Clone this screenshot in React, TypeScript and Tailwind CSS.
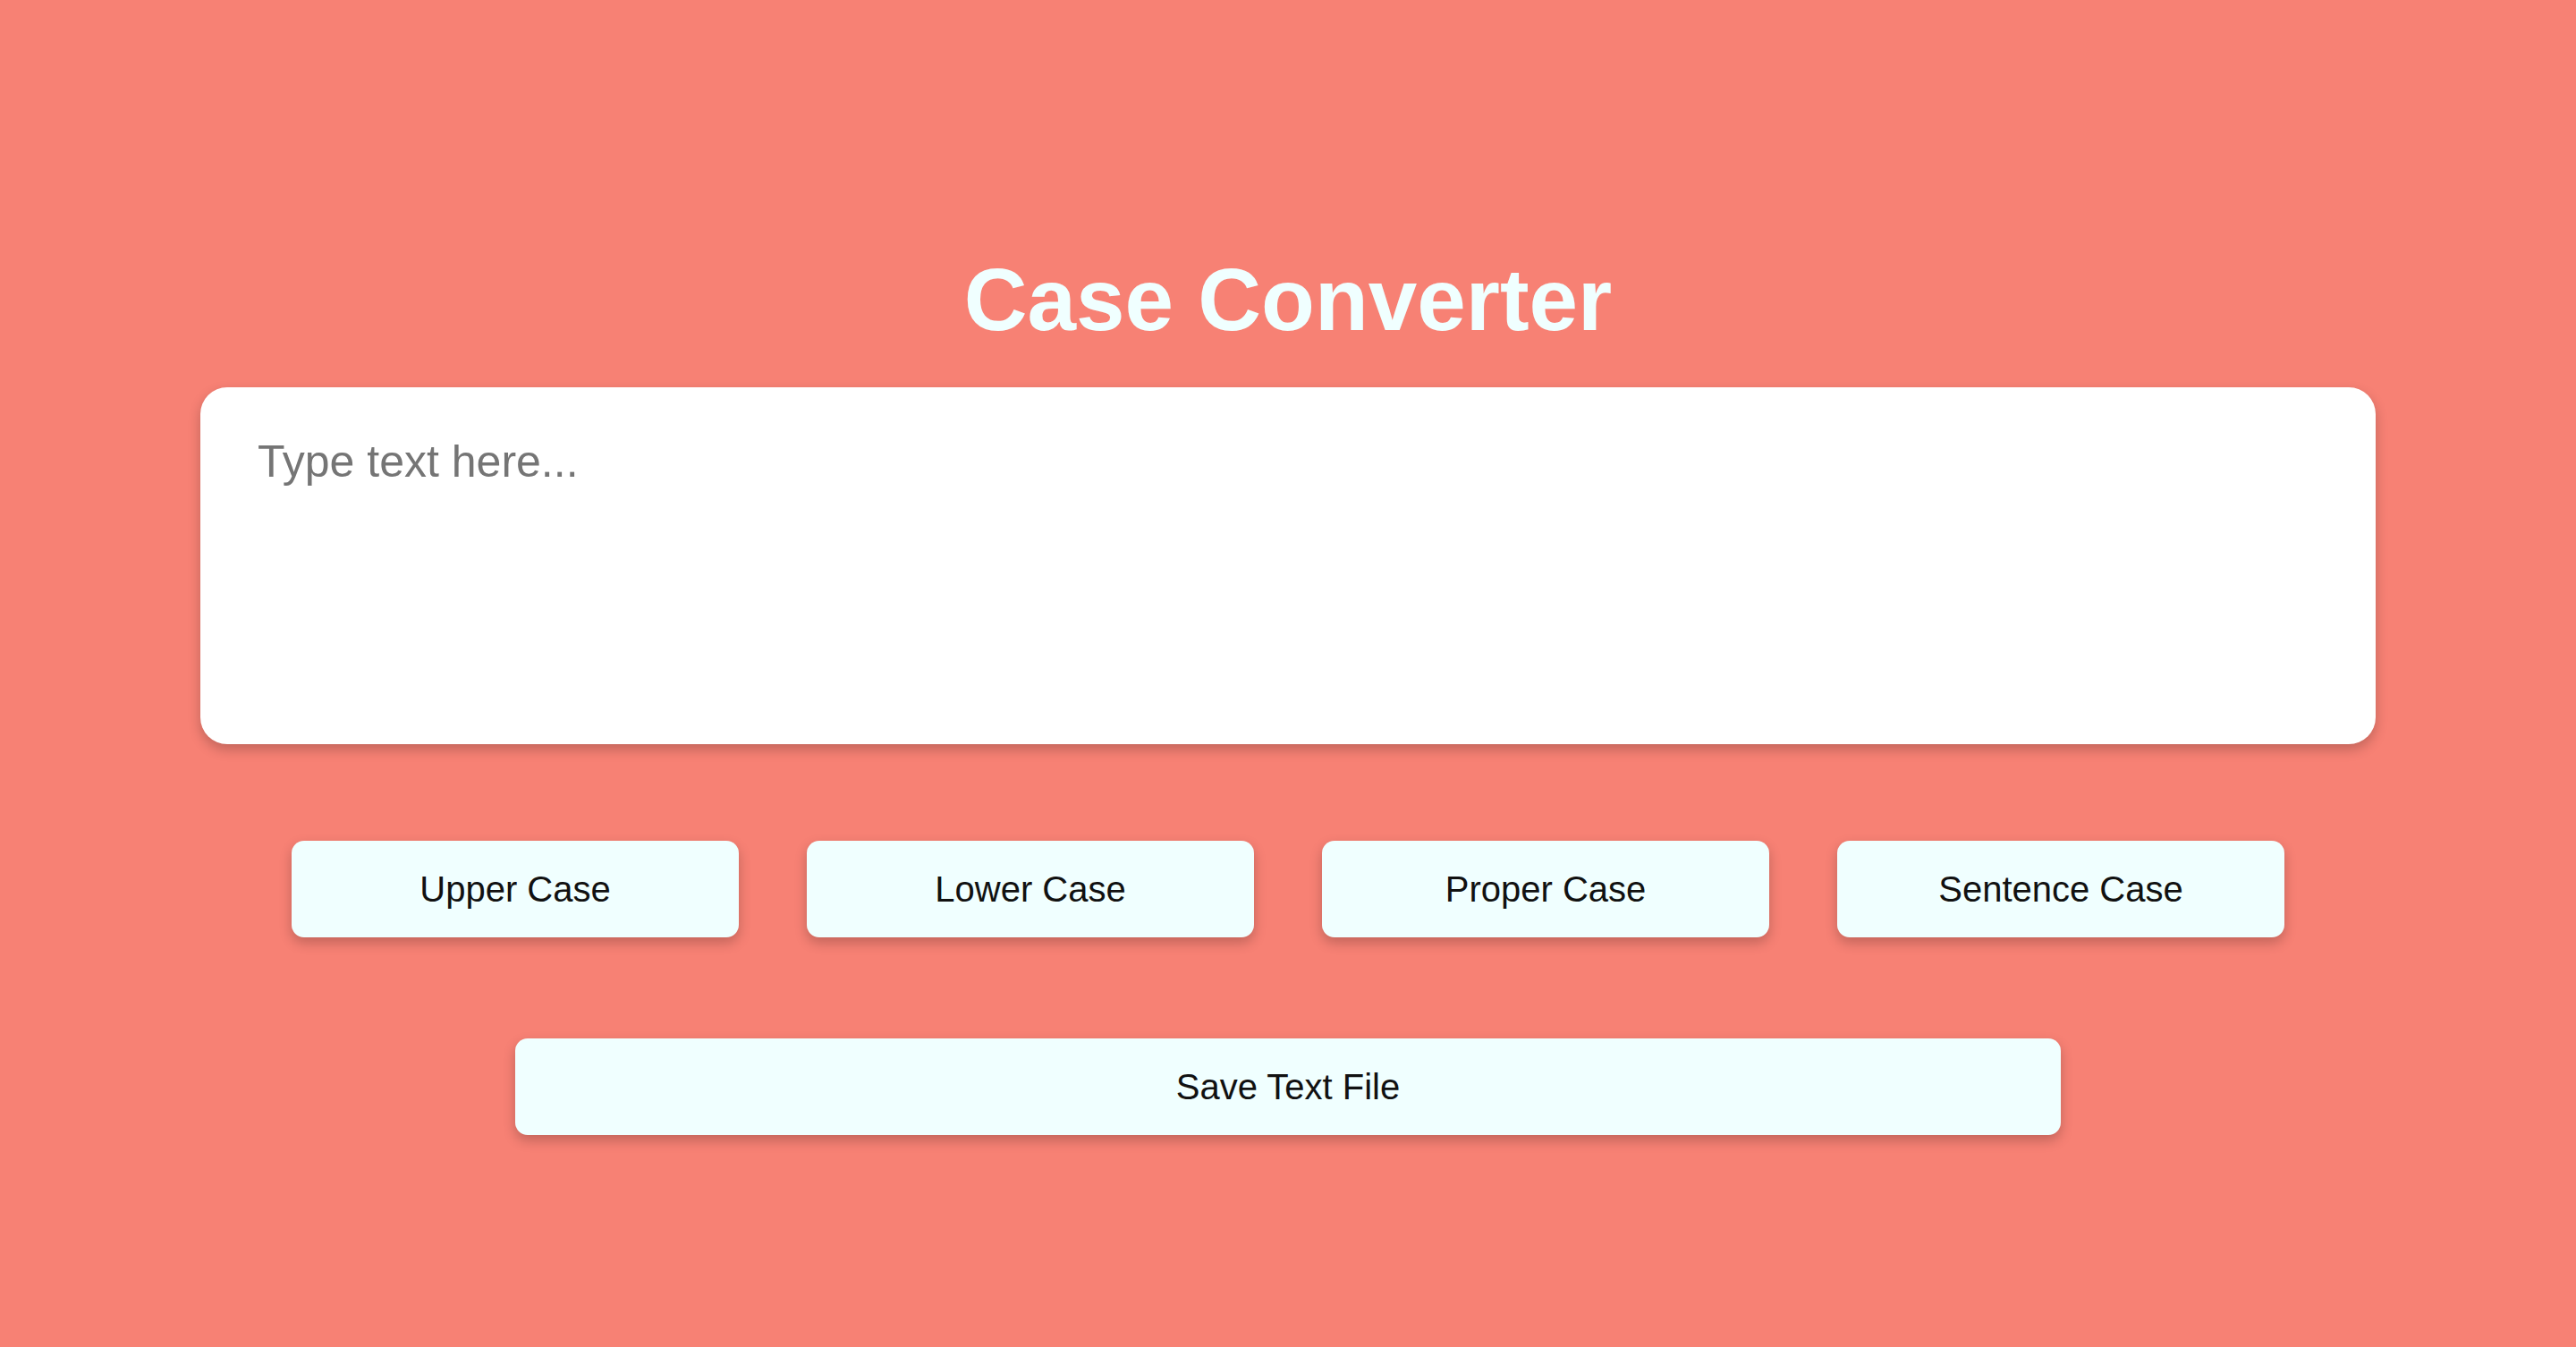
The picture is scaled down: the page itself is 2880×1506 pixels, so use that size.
import React, { useState } from "react"

const buttons = ["Upper Case", "Lower Case", "Proper Case", "Sentence Case"]

export default function App() {
  const [text, setText] = useState("")

  return (
    <div className="min-h-screen w-full bg-[#f78174] flex flex-col items-center font-['Liberation_Sans',Arial,sans-serif]">
      <h1 className="mt-[279px] text-[98px] leading-[112px] font-bold text-[#f0ffff]">Case Converter</h1>

      <textarea
        value={text}
        onChange={(e) => setText(e.target.value)}
        placeholder="Type text here..."
        className="mt-[42px] w-[2432px] h-[399px] resize-none rounded-[30px] bg-white pt-[46px] px-[64px] text-[50px] text-[#222] placeholder:text-[#757575] outline-none shadow-[0_6px_14px_rgba(0,0,0,0.22)]"
      />

      <div className="mt-[108px] flex gap-[76px]">
        {buttons.map((label) => (
          <button
            key={label}
            className="w-[500px] h-[108px] rounded-[14px] bg-[#f0ffff] text-[40px] text-[#111] shadow-[0_6px_14px_rgba(0,0,0,0.22)]"
          >
            {label}
          </button>
        ))}
      </div>

      <button className="mt-[113px] w-[1728px] h-[108px] rounded-[14px] bg-[#f0ffff] text-[40px] text-[#111] shadow-[0_6px_14px_rgba(0,0,0,0.22)]">
        Save Text File
      </button>
    </div>
  )
}
